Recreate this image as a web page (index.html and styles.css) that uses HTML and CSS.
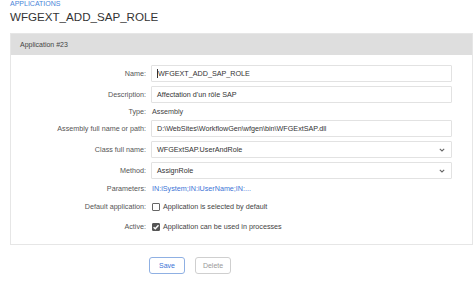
FILE: index.html
```html
<!DOCTYPE html>
<html lang="en">
<head>
    <meta charset="UTF-8">
    <title>WFGEXT_ADD_SAP_ROLE</title>
    <link rel="stylesheet" href="styles.css">
</head>
<body>

<div class="page">
    <div class="crumb">APPLICATIONS</div>
    <h1 class="title">WFGEXT_ADD_SAP_ROLE</h1>

    <div class="panel">
        <div class="panel-head">Application #23</div>
        <div class="form">
            <label class="lbl">Name:</label>
            <div class="field"><span class="caret"></span>WFGEXT_ADD_SAP_ROLE</div>

            <label class="lbl">Description:</label>
            <div class="field">Affectation d'un rôle SAP</div>

            <label class="lbl">Type:</label>
            <div class="value">Assembly</div>

            <label class="lbl">Assembly full name or path:</label>
            <div class="field">D:\WebSites\WorkflowGen\wfgen\bin\WFGExtSAP.dll</div>

            <label class="lbl">Class full name:</label>
            <div class="field select">WFGExtSAP.UserAndRole
                <svg class="chev" width="6" height="4" viewBox="0 0 6 4"><path d="M0.8 0.8 L3 3 L5.2 0.8" fill="none" stroke="#666" stroke-width="1.1"/></svg>
            </div>

            <label class="lbl">Method:</label>
            <div class="field select">AssignRole
                <svg class="chev" width="6" height="4" viewBox="0 0 6 4"><path d="M0.8 0.8 L3 3 L5.2 0.8" fill="none" stroke="#666" stroke-width="1.1"/></svg>
            </div>

            <label class="lbl">Parameters:</label>
            <div class="value link">IN:iSystem;IN:iUserName;IN:...</div>

            <label class="lbl">Default application:</label>
            <div class="value check-row"><span class="box"></span>Application is selected by default</div>

            <label class="lbl">Active:</label>
            <div class="value check-row">
                <span class="box checked">
                    <svg width="8" height="8" viewBox="0 0 8 8"><path d="M1.6 4.2 L3.3 5.8 L6.5 2.2" fill="none" stroke="#fff" stroke-width="1.4"/></svg>
                </span>Application can be used in processes
            </div>
        </div>
    </div>

    <div class="actions">
        <button class="btn save">Save</button>
        <button class="btn delete">Delete</button>
    </div>
</div>

</body>
</html>
```

FILE: styles.css
```css
body {
    margin: 0;
    padding: 0;
    background-color: #fff;
    font-family: "Liberation Sans", Arial, sans-serif;
    color: #444;
}
.page {
    padding-left: 10px;
}
.crumb {
    font-size: 7px;
    line-height: 8px;
    color: #4a86d8;
}
.title {
    margin: 2px 0 0 0;
    font-size: 11.6px;
    line-height: 14px;
    font-weight: normal;
    color: #333;
}
.panel {
    margin-top: 9px;
    width: 461px;
    border: 1px solid #e6e6e6;
}
.panel-head {
    background-color: #dedede;
    height: 21px;
    line-height: 21px;
    padding-left: 9px;
    font-size: 7px;
    color: #444;
}
.form {
    display: grid;
    grid-template-columns: 135px 301px;
    grid-template-rows: 21px 21px 13px 21px 21px 21px 16px 20px 20px;
    column-gap: 5px;
    align-items: center;
    padding: 7.5px 0 7px 0;
    font-size: 7.2px;
}
.lbl {
    text-align: right;
    color: #555;
}
.field {
    position: relative;
    height: 15px;
    line-height: 15px;
    border: 1px solid #e2e2e2;
    border-radius: 1px;
    padding-left: 5px;
    color: #333;
    display: flex;
    align-items: center;
}
.caret {
    display: inline-block;
    width: 1px;
    height: 9px;
    background-color: #333;
}
.select .chev {
    position: absolute;
    right: 6px;
    top: 6px;
}
.value {
    padding-left: 1px;
    color: #444;
}
.link {
    color: #3c74d6;
}
.check-row {
    display: flex;
    align-items: center;
}
.box {
    display: inline-block;
    box-sizing: border-box;
    width: 8px;
    height: 8px;
    border: 1px solid #666;
    border-radius: 1px;
    margin-right: 3px;
    background-color: #fff;
}
.box.checked {
    background-color: #555;
    border-color: #555;
    position: relative;
}
.box.checked svg {
    position: absolute;
    left: -1px;
    top: -1px;
}
.actions {
    display: flex;
    gap: 10px;
    margin-top: 12px;
    padding-left: 139px;
}
.btn {
    width: 36px;
    height: 17px;
    padding: 0;
    border-radius: 3px;
    background-color: #fff;
    font-family: "Liberation Sans", Arial, sans-serif;
    font-size: 7px;
}
.save {
    border: 1px solid #8fb0e3;
    color: #3c74d6;
}
.delete {
    border: 1px solid #cfcfcf;
    color: #999;
}
```
